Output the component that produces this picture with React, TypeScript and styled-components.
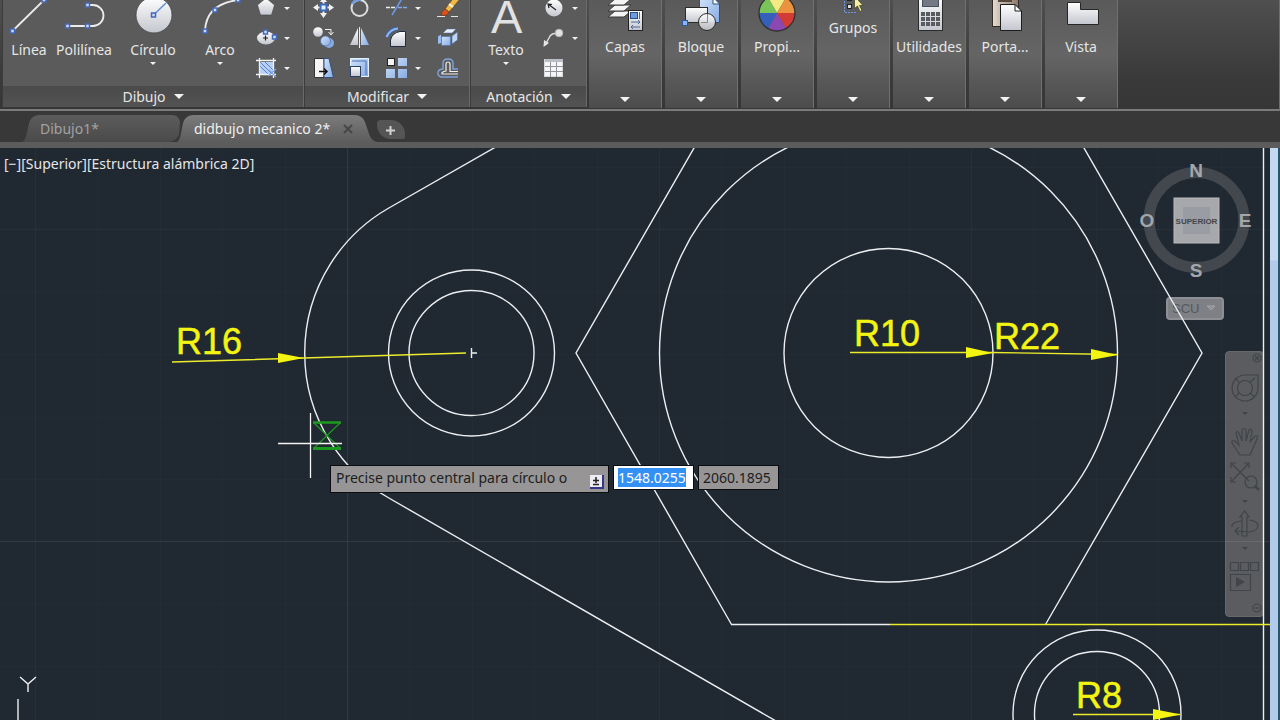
import React from 'react';
import styled, { createGlobalStyle, css } from 'styled-components';

const uiFont = '"Noto Sans", "Open Sans", sans-serif';

const GlobalStyle = createGlobalStyle`
  * { box-sizing: border-box; }
  body { margin: 0; background: #202831; font-family: ${uiFont}; }
  button, input { font: inherit; color: inherit; margin: 0; padding: 0; border: 0; background: none; }
`;

const Shell = styled.div`
  display: flex;
  flex-direction: column;
  min-height: 100vh;
  overflow: hidden;
`;

/* ---------- Ribbon ---------- */

const Ribbon = styled.header`
  display: flex;
  height: 111px;
  overflow: hidden;
  padding: 0 0 2px 2px;
  background: linear-gradient(#4f4f4f, #3a3a3a 70%, #363636);
  border-bottom: 2px solid #7b7b7b;
  border-right: 1px solid #6e6e6e;
  color: #e6e6e6;
  font-size: 14px;
`;

const Panel = styled.section<{ $width: number }>`
  display: flex;
  flex-direction: column;
  flex: none;
  width: ${(p) => p.$width}px;
  background: #5b5b5b;
  border-left: 1px solid #3c3c3c;
  border-right: 1px solid #6a6a6a;
`;

const PanelBody = styled.div<{ $columns: string }>`
  display: grid;
  grid-template-columns: ${(p) => p.$columns};
  height: 86px;
`;

const PanelTitle = styled.button`
  display: flex;
  flex: 1;
  align-items: center;
  justify-content: center;
  gap: 8px;
  line-height: 20px;
  background: linear-gradient(#4a4a4a, #535353);
`;

const LargeTool = styled.button`
  display: flex;
  flex-direction: column;
  align-items: center;
  white-space: nowrap;
  line-height: 20px;
`;

const ToolGrid = styled.div<{ $columns: string; $inset?: number }>`
  display: grid;
  grid-template-columns: ${(p) => p.$columns};
  grid-auto-rows: 30px;
  margin-top: -7px;
  padding-left: ${(p) => p.$inset ?? 0}px;
  justify-content: start;
`;

const SmallTool = styled.button`
  display: flex;
  align-items: center;
  gap: 5px;
`;

const Arrow = styled.span<{ $size?: number }>`
  flex: none;
  width: 0;
  height: 0;
  border: solid transparent;
  border-width: ${(p) => `${p.$size ?? 3}px ${p.$size ?? 3}px 0`};
  border-top-color: #f2f2f2;
`;

const LargeArrow = styled(Arrow)`
  margin-top: 2px;
`;

const SmallArrow = styled(Arrow)`
  margin-left: 1px;
`;

const CollapsedList = styled.div`
  display: flex;
  gap: 3px;
  padding-left: 2px;
`;

const CollapsedPanel = styled.button`
  display: flex;
  flex-direction: column;
  align-items: center;
  justify-content: flex-start;
  width: 73px;
  height: 108px;
  padding-bottom: 6px;
  line-height: 20px;
  white-space: nowrap;
  background: linear-gradient(#5a5a5a, #656565 50%, #4c4c4c);
  border-right: 1px solid #707070;

  & > ${Arrow} { margin-top: auto; }
`;

/* ---------- Document tabs ---------- */

const TabStrip = styled.nav`
  display: flex;
  align-items: flex-end;
  height: 37px;
  padding-left: 22px;
  background: #383838;
  border-bottom: 6px solid #5c5c5c;
  font-size: 14px;
`;

const Tab = styled.div<{ $active?: boolean }>`
  display: flex;
  align-items: center;
  height: 27px;
  line-height: 20px;
  ${(p) =>
    p.$active
      ? css`
          width: 200px;
          margin-left: -8px;
          padding-left: 17px;
          gap: 12px;
          color: #f0f0f0;
          background: linear-gradient(#7c7c7c, #5c5c5c);
          clip-path: path('M0 27 C5 25 4 9 8 4 Q11 0 17 0 H178 Q185 0 188 7 C192 17 192 25 200 27 Z');
        `
      : css`
          width: 163px;
          padding-left: 18px;
          color: #a2a2a2;
          background: linear-gradient(#5c5c5c, #4a4a4a);
          clip-path: path('M0 27 C6 25 5 9 9 4 Q12 0 18 0 H150 Q157 0 158 7 L157 20 Q153 27 146 27 Z');
        `}
`;

const CloseButton = styled.button`
  width: 12px;
  height: 20px;
  line-height: 0;
`;

const AddTab = styled.button`
  width: 28px;
  height: 19px;
  margin-bottom: 3px;
  background: #555;
  border-radius: 4px 14px 2px 14px;
  line-height: 0;
`;

/* ---------- Drawing area ---------- */

const Workspace = styled.main`
  display: flex;
  flex: 1;
  min-height: 572px;
`;

const Canvas = styled.div`
  position: relative;
  flex: 1;
  overflow: hidden;
  background: #202831;
`;

const DrawingLayer = styled.svg`
  position: absolute;
  inset: 0;
  width: 100%;
  height: 100%;
  pointer-events: none;
`;

const ScrollEdge = styled.div`
  width: 10px;
  background: linear-gradient(#c4d8f0 112px, #b2cbea 113px);
  border-right: 2px solid #27566b;
`;

const ViewportLabel = styled.div`
  position: absolute;
  left: 4px;
  top: 6px;
  color: #e4e6e8;
  font-size: 14px;
  line-height: 20px;
  white-space: nowrap;
`;

const Compass = styled.svg`
  position: absolute;
  top: 12px;
  right: 14px;
`;

const UcsMenu = styled.button`
  position: absolute;
  top: 149px;
  right: 46px;
  display: flex;
  align-items: center;
  justify-content: space-between;
  width: 58px;
  height: 23px;
  padding: 0 6px 0 4px;
  border: 2px solid #8d8f94;
  border-radius: 4px;
  background: #7e8085;
  color: #55585d;
  font: 13px "Liberation Sans", sans-serif;
`;

const NavBar = styled.div`
  position: absolute;
  top: 203px;
  right: 6px;
  display: flex;
  flex-direction: column;
  width: 39px;
  height: 266px;
  border-radius: 4px;
  background: #5a5c5f;
  border: 1px solid #66686b;
`;

const NavButton = styled.button`
  line-height: 0;
`;

const DynamicInput = styled.form`
  position: absolute;
  left: 330px;
  top: 317px;
  display: flex;
  align-items: flex-start;
  gap: 4px;
  color: #1d1d1d;
  font-size: 14px;
`;

const Prompt = styled.div`
  display: flex;
  align-items: center;
  justify-content: space-between;
  width: 279px;
  height: 28px;
  padding: 0 4px 3px 5px;
  line-height: 20px;
  white-space: nowrap;
  background: #979595;
  border: 1px solid #0b0d10;
`;

const OptionsButton = styled.button`
  align-self: flex-end;
  line-height: 0;
`;

const Field = styled.label<{ $focused?: boolean }>`
  display: flex;
  align-items: center;
  width: 81px;
  height: 25px;
  padding: 0 4px;
  border: 1px solid #0b0d10;
  background: ${(p) => (p.$focused ? '#ffffff' : '#979595')};

  input {
    width: 68px;
    height: 19px;
    color: ${(p) => (p.$focused ? '#ffffff' : '#1d1d1d')};
    background: ${(p) => (p.$focused ? '#3391f5' : 'transparent')};
  }
`;

/* ---------- Icons ---------- */

const Handle = ({ x, y }: { x: number; y: number }) => (
  <rect x={x - 2} y={y - 2} width="4" height="4" fill="#c9dbff" stroke="#4468b8" strokeWidth="1.5" />
);

const Icon = ({ box, w, h, children }: { box: string; w: number; h: number; children: React.ReactNode }) => (
  <svg width={w} height={h} viewBox={`${box} ${w} ${h}`} fill="none" aria-hidden="true">
    {children}
  </svg>
);

const Small = ({ box, arrow, label, children }: { box: string; arrow?: boolean; label: string; children: React.ReactNode }) => (
  <SmallTool type="button" aria-label={label}>
    <Icon box={box} w={24} h={24}>{children}</Icon>
    {arrow && <SmallArrow />}
  </SmallTool>
);

const HiddenSvg = styled.svg`
  position: absolute;
`;

const Defs = () => (
  <HiddenSvg width="0" height="0" aria-hidden="true">
    <defs>
      <linearGradient id="silver" x1="0" y1="0" x2="0" y2="1">
        <stop offset="0" stopColor="#ffffff" />
        <stop offset="1" stopColor="#c3c6ce" />
      </linearGradient>
      <linearGradient id="blue" x1="0" y1="0" x2="1" y2="1">
        <stop offset="0" stopColor="#d3e4fb" />
        <stop offset="1" stopColor="#86abe2" />
      </linearGradient>
      <linearGradient id="tan" x1="0" y1="0" x2="1" y2="0">
        <stop offset="0" stopColor="#e6dcd2" />
        <stop offset="1" stopColor="#8a7868" />
      </linearGradient>
    </defs>
  </HiddenSvg>
);

const wheelColors = ['#f3ea84', '#eb9440', '#d23c34', '#8a48b0', '#3460bb', '#79c458'];
const wedge = (i: number) => {
  const at = (deg: number) => {
    const a = (deg * Math.PI) / 180;
    return `${(777 + 18 * Math.cos(a)).toFixed(2)} ${(13 + 18 * Math.sin(a)).toFixed(2)}`;
  };
  return `M777 13 L${at(-120 + i * 60)} A18 18 0 0 1 ${at(-60 + i * 60)} Z`;
};

const collapsed = [
  {
    label: 'Capas',
    h: 37,
    icon: (
      <>
        {[12, 6, 0].map((y) => (
          <path key={y} d={`M608 ${y + 5} L615 ${y - 1} H631 L624 ${y + 5} Z`} fill="#f4f4f4" stroke="#383838" />
        ))}
        <rect x="628.500" y="10.500" width="14" height="20" fill="url(#silver)" stroke="#222" />
        <rect x="630.500" y="12.500" width="7" height="6" fill="#6f9bdc" stroke="#294f8e" />
        <path d="M639.500 12v7M631 22h9m-2-2 2 2-2 2M640 27h-9m2-2-2 2 2 2" stroke="#4c6695" />
      </>
    ),
  },
  {
    label: 'Bloque',
    h: 37,
    icon: (
      <>
        <path d="M699.500 -3H713L719.500 4V22.500H699.500Z" fill="url(#blue)" stroke="#315077" />
        <path d="M713 -3V4H719.500Z" fill="#fff" stroke="#315077" />
        <rect x="685.500" y="7.500" width="22" height="15" fill="url(#silver)" stroke="#2b2b2b" />
        <circle cx="707" cy="22" r="8.500" fill="url(#silver)" fillOpacity=".9" stroke="#2b2b2b" />
        <path d="M701 22.500H707.500V14" stroke="#888" />
        <rect x="682.500" y="20.500" width="5" height="5" fill="#8db4f1" stroke="#2c58a5" />
      </>
    ),
  },
  {
    label: 'Propi...',
    h: 37,
    icon: (
      <>
        {wheelColors.map((c, i) => <path key={c} d={wedge(i)} fill={c} />)}
        <circle cx="777" cy="13" r="18" stroke="#303030" strokeWidth="1.300" />
      </>
    ),
  },
  {
    label: 'Grupos',
    h: 18,
    icon: (
      <>
        <path d="M844.500 -2V12.500H856" stroke="#6d96e0" strokeDasharray="2 1" />
        <rect x="847.500" y="4.500" width="4" height="4" fill="#ddd" stroke="#222" />
        <rect x="847.500" y="-3.500" width="4" height="4" fill="#ddd" stroke="#222" />
        <path d="M854.500 -4V8.500L857.500 6 860 11.500 862 10.500 859.500 5.500H863Z" fill="#f5f0a6" stroke="#3c3c20" strokeWidth=".7" />
      </>
    ),
  },
  {
    label: 'Utilidades',
    h: 37,
    icon: (
      <>
        <rect x="918.500" y="-4" width="24" height="34.500" fill="url(#silver)" stroke="#2b2b2b" />
        <rect x="922.500" y="-2" width="16" height="8.500" fill="#747986" stroke="#4b505b" />
        {[12, 17, 22].map((y) => [921, 926, 931, 936].map((x) => (
          <rect key={`${x}-${y}`} x={x} y={y} width="4" height="4" fill="#595b61" />
        )))}
      </>
    ),
  },
  {
    label: 'Porta...',
    h: 37,
    icon: (
      <>
        <rect x="992.500" y="-4" width="26" height="30.500" fill="url(#tan)" stroke="#352d26" />
        <rect x="998" y="-3" width="14" height="5" fill="#55483c" />
        <path d="M1000.500 4.500H1015L1021.500 11V30.500H1000.500Z" fill="url(#silver)" stroke="#1d1d1d" />
        <path d="M1015 4.500V11H1021.500Z" fill="#fff" stroke="#1d1d1d" />
      </>
    ),
  },
  {
    label: 'Vista',
    h: 37,
    icon: <path d="M1067.500 2.500H1080.500V9.500H1098.500V24.500H1067.500Z" fill="url(#silver)" stroke="#262626" />,
  },
];

const DrawPanel = () => (
  <Panel $width={302}>
    <PanelBody $columns="52px 58px 80px 54px 1fr">
      <LargeTool type="button">
        <Icon box="5 0" w={48} h={40}>
          <path d="M12.500 31 44 0" stroke="#ececec" strokeWidth="1.800" />
          <Handle x={12.5} y={31} /><Handle x={44} y={0} />
        </Icon>
        Línea
      </LargeTool>
      <LargeTool type="button">
        <Icon box="60 0" w={48} h={40}>
          <path d="M67 26H93A10.500 10.500 0 0 0 93 5H87" stroke="#ececec" strokeWidth="1.800" />
          <Handle x={67.5} y={26} /><Handle x={87.5} y={26} /><Handle x={87.5} y={5} />
        </Icon>
        Polilínea
      </LargeTool>
      <LargeTool type="button">
        <Icon box="129 0" w={48} h={40}>
          <circle cx="154" cy="15" r="18" fill="url(#silver)" stroke="#444" strokeWidth=".8" />
          <path d="M153.500 15 166 3" stroke="#5d90dd" strokeWidth="1.500" />
          <Handle x={153.5} y={15} />
        </Icon>
        Círculo
        <LargeArrow />
      </LargeTool>
      <LargeTool type="button">
        <Icon box="196 0" w={48} h={40}>
          <path d="M205 31Q206 4 238 0" stroke="#ececec" strokeWidth="1.800" />
          <Handle x={205} y={31} /><Handle x={215} y={10} /><Handle x={238} y={0} />
        </Icon>
        Arco
        <LargeArrow />
      </LargeTool>
      <ToolGrid $columns="46px" $inset={7}>
        <Small box="254 -4" arrow label="Polígono">
          <path d="M266 -2 274.500 5 271.500 15H260.500L257.500 5Z" fill="url(#silver)" stroke="#444" strokeWidth=".6" />
        </Small>
        <Small box="254 26" arrow label="Elipse">
          <ellipse cx="266" cy="38" rx="9" ry="6.500" fill="url(#silver)" />
          <path d="M263 38h5m-2.500-2.500v5" stroke="#222" strokeWidth="1.200" />
          <Handle x={265.5} y={32} /><Handle x={274.5} y={37} />
        </Small>
        <Small box="254 56" arrow label="Sombreado">
          <rect x="260" y="62" width="13" height="12" fill="#b7d0f5" />
          <path d="m260 66 8 8m-8-12 12 12m-7-12 8 8" stroke="#557fc8" />
          <path d="M259.500 58v20M256 60.500h20M273.500 58v20M256 74.500h20" stroke="#f2f2f2" strokeWidth="1.300" />
          <path d="m268 76 8-7m-7 1 7 7" stroke="#7ba6ea" strokeWidth="1.300" />
        </Small>
      </ToolGrid>
    </PanelBody>
    <PanelTitle type="button">Dibujo <Arrow $size={5} /></PanelTitle>
  </Panel>
);

const ModifyPanel = () => (
  <Panel $width={166}>
    <PanelBody $columns="1fr">
      <ToolGrid $columns="37px 37px 51px 24px" $inset={6}>
        <Small box="311 -4" label="Desplaza">
          <path d="M323.500 0V15M315 7.500H332" stroke="#f0f0f0" strokeWidth="2" />
          <path d="M323.500 -3 327 2H320ZM323.500 18 327 13H320ZM313 7.500 318 4V11ZM334 7.500 329 4V11Z" fill="#f0f0f0" />
          <rect x="320.500" y="4.500" width="6" height="6" fill="#e6efff" stroke="#3968bd" strokeWidth="2" />
        </Small>
        <Small box="348 -4" label="Gira">
          <circle cx="359.500" cy="8" r="8" stroke="#dedede" strokeWidth="2" />
          <path d="M352 4Q355 -1 361 0" stroke="#709be0" strokeWidth="2.500" />
        </Small>
        <Small box="385 -4" arrow label="Recorta">
          <path d="M386 7.500h9" stroke="#eee" strokeWidth="1.500" strokeDasharray="4 1" />
          <path d="M398 7.500h10" stroke="#82abe9" strokeWidth="1.500" strokeDasharray="4 1" />
          <path d="M392 15 403 -3" stroke="#6b98df" strokeWidth="1.600" />
        </Small>
        <Small box="436 -4" label="Borra">
          <path d="M437 16.500h8M451 16.500h7" stroke="#e6e6e6" strokeWidth="1.200" />
          <path d="M445 9 455 -4 460 -1 449 12Z" fill="#f0b845" stroke="#5c451f" strokeWidth=".7" />
          <path d="M449 4 453 7" stroke="#f4f4f4" strokeWidth="2" />
          <path d="M445 9 449 12Q447 17 441 15Q442 10 445 9Z" fill="#d9531e" stroke="#702e13" strokeWidth=".6" />
        </Small>
        <Small box="311 26" label="Copia">
          <circle cx="318" cy="32" r="4.800" fill="url(#silver)" />
          <path d="M325 29.500H331V34m-2.500-2 2.500 3 2.500-3" stroke="#eee" />
          <circle cx="329" cy="43" r="5" fill="#86aae2" />
          <circle cx="325.500" cy="41" r="5" fill="url(#blue)" stroke="#4c6b9d" strokeWidth=".7" />
        </Small>
        <Small box="348 26" label="Simetría">
          <path d="M350 45H358V28Z" fill="url(#silver)" />
          <path d="M369 45H361V28Z" fill="url(#blue)" />
          <path d="M359.500 27V48" stroke="#eee" />
        </Small>
        <Small box="385 26" arrow label="Empalme">
          <path d="M386.500 37Q390 29 398 28.500" stroke="#3d64a8" strokeWidth="4" />
          <path d="M386.500 37Q390 29 398 28.500" stroke="#8fb4ee" strokeWidth="2" />
          <path d="M390.500 46.500V40Q392 33 400 31.500H405.500V46.500Z" fill="url(#silver)" stroke="#1f2b3e" />
        </Small>
        <Small box="436 26" label="Descompone">
          <path d="M438 36.500 441 34.500V43L438 44Z" fill="#9bbcf0" />
          <path d="M443 33 447 29H456L452 33Z" fill="#e6effd" stroke="#4d6fa6" strokeWidth=".5" />
          <path d="M441.500 36.500H450.500V45.500H441.500Z" fill="url(#blue)" stroke="#4d6fa6" strokeWidth=".6" />
          <path d="M452 36 457.500 32V40L452 44Z" fill="#bfd6fa" stroke="#4d6fa6" strokeWidth=".6" />
        </Small>
        <Small box="311 56" label="Estira">
          <path d="M314.500 58.500H324V77.500H314.500Z" fill="#f5f5f5" stroke="#333" />
          <path d="M324 58.500H329L333.500 77.500H324Z" fill="url(#blue)" stroke="#33507e" />
          <path d="M319 71.500h7m-2-3 3 3-3 3" stroke="#111" strokeWidth="1.500" />
        </Small>
        <Small box="348 56" label="Escala">
          <rect x="350.500" y="58.500" width="18" height="18" fill="url(#blue)" stroke="#e6efff" />
          <path d="M352 61H366V75" stroke="#4b72b4" />
          <rect x="350.500" y="66.500" width="10" height="10" fill="url(#silver)" stroke="#2c4166" />
        </Small>
        <Small box="385 56" arrow label="Matriz">
          <rect x="387.500" y="58.500" width="7" height="7" fill="#f4f4f4" stroke="#222" />
          <path d="M398 58H407V66H398ZM386 69H395V78H386ZM398 69H407V78H398Z" fill="url(#blue)" />
        </Small>
        <Small box="436 56" label="Desfase">
          <path d="M458 77H441Q437 75 438 72Q439 69 443 69V63Q443 59 448 59T453 63V69H458" stroke="#7da3dd" strokeWidth="1.400" />
          <path d="M458 74H442Q441 72 446 71V64Q446 62 448 62T450 64V71.500H458" stroke="#f1f1f1" strokeWidth="1.200" />
        </Small>
      </ToolGrid>
    </PanelBody>
    <PanelTitle type="button">Modificar <Arrow $size={5} /></PanelTitle>
  </Panel>
);

const BigLetter = styled.text`
  font: 47px "Liberation Sans", sans-serif;
  fill: #e2e2e2;
`;

const AnnotationPanel = () => (
  <Panel $width={117}>
    <PanelBody $columns="70px 1fr">
      <LargeTool type="button">
        <Icon box="482 0" w={48} h={40}><BigLetter x="491" y="33">A</BigLetter></Icon>
        Texto
        <LargeArrow />
      </LargeTool>
      <ToolGrid $columns="46px" $inset={1}>
        <Small box="542 -4" arrow label="Cota">
          <circle cx="554" cy="8" r="8.500" fill="url(#silver)" />
          <path d="M556 10 548 4m1 4-1-4 4 .5" stroke="#222" strokeWidth="1.200" />
        </Small>
        <Small box="542 26" arrow label="Directriz">
          <path d="M556 33.500Q551 33 549 38L545 45" stroke="#e0e0e0" strokeWidth="1.400" />
          <path d="M543.500 47 544 40 549 43Z" fill="#e6e6e6" />
          <circle cx="559" cy="33" r="3.800" fill="#e2e2e2" stroke="#b5b5b5" />
        </Small>
        <Small box="542 56" label="Tabla">
          <rect x="544.500" y="59.500" width="18" height="17" fill="#f6f6f6" stroke="#d8d8d8" />
          <rect x="545" y="59" width="18" height="3" fill="#b9bdc5" />
          <path d="M545 66.500h18M545 71.500h18M550.500 62v15M556.500 62v15" stroke="#8f939b" />
        </Small>
      </ToolGrid>
    </PanelBody>
    <PanelTitle type="button">Anotación <Arrow $size={5} /></PanelTitle>
  </Panel>
);

/* ---------- Drawing ---------- */

const Dimension = styled.text`
  font: 36px "Liberation Sans", sans-serif;
  fill: #f4f413;
  stroke: #f4f413;
  stroke-width: 0.5px;
`;

const gridLines = (start: number, end: number, step: number) => {
  const out: number[] = [];
  for (let v = start; v < end; v += step) out.push(Math.round(v));
  return out;
};

const Drawing = () => (
  <DrawingLayer>
    <g transform="translate(0 -148)" fill="none">
      <g stroke="#ffffff" strokeWidth="1" shapeRendering="crispEdges">
        <g strokeOpacity=".015">
          {gridLines(35, 1270, 62.4).map((x) => <path key={x} d={`M${x}.5 148V1400`} />)}
          {gridLines(167, 1400, 62.4).map((y) => <path key={y} d={`M0 ${y}.5H3000`} />)}
        </g>
        <path d="M347.500 148V1400M0 541.500H3000" strokeOpacity=".07" />
        <path d="M35.500 148V1400M659.500 148V1400M971.500 148V1400M0 229.500H3000" strokeOpacity=".02" />
      </g>
      <g stroke="#eceff2" strokeWidth="1.400">
        <circle cx="471.500" cy="353" r="83" />
        <circle cx="471.500" cy="353" r="62.500" />
        <circle cx="888.500" cy="353" r="104.500" />
        <circle cx="888.500" cy="353" r="229" />
        <circle cx="1097" cy="714" r="84" />
        <circle cx="1097" cy="714" r="62.500" />
        <path d="M599 88 388 208.500A167 167 0 0 0 388 497.500L861 770" />
        <path d="M731.500 624.500 576 353 732 82H1046L1202 353 1045.500 624.500" />
        <path d="M731 624.500H890M1263.500 148V1400" />
        <path d="M471.500 348v10M471 353h6" />
        <path d="M20 677 28 684 36 677M28 684V692M18 699V1400" />
      </g>
      <g stroke="#ecec2c" strokeWidth="1.400">
        <path d="M890 624.500H1270M172 362 466 353M850 352.500H992L1117 354.500M1073 714.500H1180" />
        <path d="M278 353V363L304 358ZM966 347V358L993 353ZM1091 349V360L1118 355ZM1153 709V720L1181 714.500Z" fill="#f4f413" stroke="none" />
      </g>
      <Dimension x="176" y="354">R16</Dimension>
      <Dimension x="854" y="346">R10</Dimension>
      <Dimension x="994" y="349">R22</Dimension>
      <Dimension x="1076" y="708">R8</Dimension>
      <g stroke="#1b9a1f">
        <path d="M313 422.500H341" strokeWidth="2.500" />
        <path d="M313 448.500H341" strokeWidth="3" />
        <path d="M314 423 340 448M340 423 314 448" strokeWidth="1.200" />
      </g>
      <path d="M310.500 413V478M278 443.500H342" stroke="#f4f4f4" strokeWidth="1.300" />
    </g>
  </DrawingLayer>
);

const CompassText = styled.text`
  font: bold 19px "Liberation Sans", sans-serif;
  fill: #a3a6aa;
  text-anchor: middle;
`;

const CubeText = styled.text`
  font: bold 8px "Liberation Sans", sans-serif;
  fill: #44464b;
  text-anchor: middle;
`;

const ViewCube = () => (
  <Compass width="116" height="124" viewBox="1140 160 116 124">
    <circle cx="1196.500" cy="220" r="47.500" fill="none" stroke="#43484f" strokeWidth="11" />
    <rect x="1174" y="198" width="45" height="45" fill="#a7a8ab" stroke="#b8b9bb" />
    <rect x="1183" y="207" width="27" height="27" fill="#9a9ca3" />
    <CubeText x="1196.500" y="224">SUPERIOR</CubeText>
    <CompassText x="1196" y="177">N</CompassText>
    <CompassText x="1147" y="227">O</CompassText>
    <CompassText x="1245" y="227">E</CompassText>
    <CompassText x="1196" y="277">S</CompassText>
  </Compass>
);

const NavIcon = ({ y, h, label, children }: { y: number; h: number; label: string; children: React.ReactNode }) => (
  <NavButton type="button" aria-label={label}>
    <svg width="37" height={h} viewBox={`1226 ${y} 37 ${h}`} fill="none" stroke="#414448" strokeWidth="1.200">
      {children}
    </svg>
  </NavButton>
);

const Navigation = () => (
  <NavBar>
    <NavIcon y={352} h={14} label="Cerrar">
      <circle cx="1257" cy="358" r="4" />
      <path d="m1255 356 4 4m0-4-4 4" />
    </NavIcon>
    <NavIcon y={366} h={52} label="Rueda de navegación">
      <path d="M1245 375H1258V389A13 13 0 1 1 1245 375Z" />
      <circle cx="1245" cy="388" r="7.500" />
      <path d="m1239 393-4 4m15-4 5 4m-5-15 5-4m-16 4-4-4" />
      <path d="M1242 412h6l-3 3Z" fill="#414448" stroke="none" />
    </NavIcon>
    <NavIcon y={418} h={42} label="Encuadre">
      <path d="M1240 455 1232 443Q1231 440 1235 441L1239 445 1236 433Q1237 430 1239 433L1242 441 1242 430Q1244 427 1246 430L1246 441 1249 430Q1252 428 1252 432L1250 442 1255 436Q1259 435 1257 439L1250 455Z" />
    </NavIcon>
    <NavIcon y={460} h={48} label="Zoom extensión">
      <path d="m1231 463 18 18m0-18-18 19m0-14v-5h5m8 0h5v5m-18 9v5h5" />
      <circle cx="1251" cy="482" r="6" />
      <path d="m1255 486 4 4" strokeWidth="2.500" />
      <path d="M1242 500h6l-3 3Z" fill="#414448" stroke="none" />
    </NavIcon>
    <NavIcon y={508} h={46} label="Órbita">
      <path d="M1242 536V517H1240L1244.500 511 1249 517H1247V536Z" />
      <path d="M1249 520C1262 521 1260 531 1249 532L1235 531m4-4-4 4 4 4M1242 521Q1231 522 1232 527" />
      <path d="M1242 547h6l-3 3Z" fill="#414448" stroke="none" />
    </NavIcon>
    <NavIcon y={554} h={60} label="ShowMotion">
      <path d="M1230.500 562.500h8v8h-8ZM1240.500 562.500h8v8h-8ZM1250.500 562.500h8v8h-8ZM1230.500 574.500h20v16h-20Z" />
      <path d="M1236 577v10l9-5Z" fill="#414448" stroke="none" />
      <circle cx="1257" cy="608" r="4" />
      <path d="M1255 608h4" />
    </NavIcon>
  </NavBar>
);

export default function App() {
  return (
    <Shell>
      <GlobalStyle />
      <Defs />
      <Ribbon>
        <DrawPanel />
        <ModifyPanel />
        <AnnotationPanel />
        <CollapsedList>
          {collapsed.map((p, i) => (
            <CollapsedPanel key={p.label} type="button">
              <Icon box={`${589 + 76 * i} 0`} w={73} h={p.h}>{p.icon}</Icon>
              {p.label}
              <Arrow $size={5} />
            </CollapsedPanel>
          ))}
        </CollapsedList>
      </Ribbon>
      <TabStrip>
        <Tab>Dibujo1*</Tab>
        <Tab $active>
          didbujo mecanico 2*
          <CloseButton type="button" aria-label="Cerrar dibujo">
            <svg width="12" height="20"><path d="m2 6 8 8m0-8-8 8" stroke="#464646" strokeWidth="2" /></svg>
          </CloseButton>
        </Tab>
        <AddTab type="button" aria-label="Nuevo dibujo">
          <svg width="28" height="19"><path d="M9 10.500h9M13.500 6v9" stroke="#d2d2d2" strokeWidth="2" /></svg>
        </AddTab>
      </TabStrip>
      <Workspace>
        <Canvas>
          <ViewCube />
          <UcsMenu type="button">
            SCU
            <svg width="10" height="7"><path d="M1 1h8L5 5Z" fill="#8f9196" stroke="#a3a5a9" /></svg>
          </UcsMenu>
          <Navigation />
          <Drawing />
          <ViewportLabel>[−][Superior][Estructura alámbrica 2D]</ViewportLabel>
          <DynamicInput>
            <Prompt>
              Precise punto central para círculo o
              <OptionsButton type="button" aria-label="Opciones">
                <svg width="14" height="14">
                  <rect x="0" y="0" width="14" height="14" fill="#35358a" />
                  <rect x="0" y="0" width="12" height="12" fill="#ececf2" />
                  <path d="M6 2v6M3 5.500h6M3 9.500h6" stroke="#222" strokeWidth="1.500" />
                </svg>
              </OptionsButton>
            </Prompt>
            <Field $focused><input aria-label="Coordenada X" defaultValue="1548.0255" /></Field>
            <Field><input aria-label="Coordenada Y" defaultValue="2060.1895" /></Field>
          </DynamicInput>
        </Canvas>
        <ScrollEdge />
      </Workspace>
    </Shell>
  );
}
